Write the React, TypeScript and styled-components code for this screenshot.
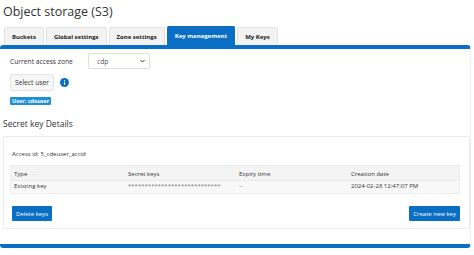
import React from 'react';
import styled, {createGlobalStyle} from 'styled-components';

const blue = '#0b6ec5';

const GlobalStyle = createGlobalStyle`
  html, body {
    margin: 0;
    padding: 0;
    background: #ffffff;
  }
  body {
    font-family: "Open Sans", "Noto Sans", sans-serif;
    color: #333333;
    width: 474px;
    height: 255px;
    overflow: hidden;
  }
`;

const Page = styled.div`
  padding: 3px 3px 0 0;
`;

const Title = styled.h1`
  margin: 0 0 0 3px;
  font-size: 12.5px;
  font-weight: 400;
  line-height: 18px;
  color: #333;
`;

const Tabs = styled.div`
  display: flex;
  gap: 2px;
  padding-left: 4px;
  margin-top: 5px;
  align-items: flex-end;
`;

const Tab = styled.div<{ $active?: boolean }>`
  height: ${p => (p.$active ? '19px' : '18px')};
  padding: 0 7px;
  display: flex;
  align-items: center;
  font-size: 6px;
  font-weight: 700;
  border: 1px solid ${p => (p.$active ? blue : '#e2e2e2')};
  border-bottom: none;
  border-radius: 2px 2px 0 0;
  background: ${p => (p.$active ? blue : '#f3f3f3')};
  color: ${p => (p.$active ? '#ffffff' : '#222')};
  box-sizing: border-box;
`;

const Panel = styled.div`
  border-top: 4px solid ${blue};
  border-bottom: 4px solid ${blue};
  border-right: 1px solid #f0f0f0;
  border-radius: 3px 4px 4px 3px;
  padding: 0 0 15px 3px;
`;

const Form = styled.div`
  padding: 4px 0 0 7px;
  display: flex;
  flex-direction: column;
  align-items: flex-start;
`;

const FieldRow = styled.div`
  display: flex;
  align-items: center;
`;

const Label = styled.span`
  font-size: 6.7px;
  width: 78px;
`;

const Select = styled.div`
  width: 62px;
  height: 16px;
  box-sizing: border-box;
  border: 1px solid #dedede;
  border-radius: 2px;
  display: flex;
  align-items: center;
  justify-content: space-between;
  padding: 0 4px 0 8px;
  font-size: 6.7px;
  color: #555;
`;

const UserRow = styled.div`
  display: flex;
  align-items: center;
  gap: 6px;
  margin-top: 5px;
`;

const GhostButton = styled.div`
  height: 17px;
  box-sizing: border-box;
  padding: 0 4px;
  display: flex;
  align-items: center;
  font-size: 6.7px;
  background: #f6f6f6;
  border: 1px solid #e4e4e4;
  border-radius: 2px;
  color: #333;
`;

const Badge = styled.span`
  margin-top: 6px;
  background: #1e8fd3;
  color: #fff;
  font-size: 5.5px;
  font-weight: 700;
  padding: 1px 2px;
  border-radius: 1px;
  line-height: 6px;
`;

const SubTitle = styled.h2`
  margin: 13px 0 0;
  font-size: 8.5px;
  font-weight: 400;
  line-height: 12px;
  color: #333;
`;

const Card = styled.div`
  margin-top: 6px;
  border: 1px solid #ebebeb;
  border-radius: 2px;
  padding: 13px 9px 7px 6px;
`;

const AccessId = styled.div`
  font-size: 6px;
  color: #333;
  margin-left: 2px;
`;

const Table = styled.div`
  margin-top: 7px;
  border: 1px solid #ececec;
  font-size: 6px;
`;

const TableRow = styled.div<{ $head?: boolean }>`
  display: grid;
  grid-template-columns: 114px 111px 112px 1fr;
  height: ${p => (p.$head ? '14px' : '12px')};
  background: ${p => (p.$head ? '#f4f4f4' : '#f8f8f8')};
  border-top: ${p => (p.$head ? 'none' : '1px solid #ececec')};
  align-items: ${p => (p.$head ? 'end' : 'center')};
`;

const Cell = styled.div<{ $muted?: boolean }>`
  padding: 0 3px 2px;
  color: ${p => (p.$muted ? '#777' : '#333')};
  white-space: nowrap;
`;

const SortHint = styled.span`
  color: #aaa;
  margin-left: 4px;
`;

const Actions = styled.div`
  display: flex;
  justify-content: space-between;
  margin-top: 12px;
  padding-left: 2px;
`;

const PrimaryButton = styled.div`
  height: 15px;
  padding: 0 4px;
  display: flex;
  align-items: center;
  background: ${blue};
  color: #fff;
  font-size: 6px;
  border-radius: 1px;
`;

const InfoIcon = () => (
  <svg width="9" height="9" viewBox="0 0 16 16">
    <circle cx="8" cy="8" r="8" fill="#0b6ec5" />
    <rect x="7" y="7" width="2" height="5" fill="#fff" />
    <circle cx="8" cy="4.6" r="1.2" fill="#fff" />
  </svg>
);

const Chevron = () => (
  <svg width="5" height="4" viewBox="0 0 10 6">
    <path d="M1 1l4 4 4-4" stroke="#333" strokeWidth="2" fill="none" />
  </svg>
);

const tabs = ['Buckets', 'Global settings', 'Zone settings', 'Key management', 'My Keys'];

export default function App() {
  return (
    <>
      <GlobalStyle />
      <Page>
        <Title>Object storage (S3)</Title>
        <Tabs>
          {tabs.map(t => (
            <Tab key={t} $active={t === 'Key management'}>{t}</Tab>
          ))}
        </Tabs>
        <Panel>
          <Form>
            <FieldRow>
              <Label>Current access zone</Label>
              <Select>
                <span>cdp</span>
                <Chevron />
              </Select>
            </FieldRow>
            <UserRow>
              <GhostButton>Select user</GhostButton>
              <InfoIcon />
            </UserRow>
            <Badge>User: cdeuser</Badge>
          </Form>
          <SubTitle>Secret key Details</SubTitle>
          <Card>
            <AccessId>Access id: 5_cdeuser_accid</AccessId>
            <Table>
              <TableRow $head>
                <Cell>Type<SortHint>- -</SortHint></Cell>
                <Cell>Secret keys</Cell>
                <Cell>Expiry time</Cell>
                <Cell>Creation date</Cell>
              </TableRow>
              <TableRow>
                <Cell>Existing key</Cell>
                <Cell $muted>****************************</Cell>
                <Cell $muted>--</Cell>
                <Cell>2024-02-28 12:47:07 PM</Cell>
              </TableRow>
            </Table>
            <Actions>
              <PrimaryButton>Delete keys</PrimaryButton>
              <PrimaryButton>Create new key</PrimaryButton>
            </Actions>
          </Card>
        </Panel>
      </Page>
    </>
  );
}
